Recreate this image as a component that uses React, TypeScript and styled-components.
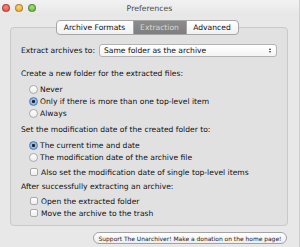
import React from "react";
import styled, { createGlobalStyle } from "styled-components";

const Global = createGlobalStyle`
  html, body { margin: 0; padding: 0; background: #e6e6e6; }
  * { box-sizing: border-box; }
`;

const Window = styled.div`
  width: 300px;
  height: 247px;
  background: #e8e8e8;
  font-family: "DejaVu Sans", "Liberation Sans", sans-serif;
  font-size: 7.6px;
  color: #111;
  display: flex;
  flex-direction: column;
  overflow: hidden;
  border-right: 1px solid #cfcfcf;
`;

const TitleBar = styled.div`
  height: 16px;
  display: grid;
  grid-template-columns: 60px 1fr 60px;
  align-items: center;
  background: linear-gradient(#f2f2f2, #e6e6e6);
`;

const Lights = styled.div`
  display: flex;
  gap: 5px;
  padding-left: 2px;
`;

const Light = styled.span<{ $c: string; $d: string }>`
  width: 8px;
  height: 8px;
  border-radius: 50%;
  background: radial-gradient(circle at 50% 35%, ${(p) => p.$c}, ${(p) => p.$d});
  border: 0.5px solid rgba(0, 0, 0, 0.25);
`;

const Title = styled.div`
  text-align: center;
  color: #4a4a4a;
  font-size: 7.8px;
`;

const Body = styled.div`
  display: flex;
  flex-direction: column;
  padding: 4px 11px 0 10px;
`;

const TabBar = styled.div`
  display: flex;
  justify-content: center;
  margin-bottom: -8px;
  position: relative;
  z-index: 1;
  padding-right: 3px;
`;

const Tab = styled.div<{ $active?: boolean; $w: number }>`
  width: ${(p) => p.$w}px;
  height: 15px;
  display: flex;
  align-items: center;
  justify-content: center;
  font-size: 7.6px;
  border: 1px solid #a6a6a6;
  margin-left: -1px;
  background: ${(p) =>
    p.$active ? "linear-gradient(#8c8c8c, #7e7e7e)" : "linear-gradient(#ffffff, #f1f1f1)"};
  color: ${(p) => (p.$active ? "#d8d8d8" : "#111")};
  &:first-child {
    border-radius: 4px 0 0 4px;
  }
  &:last-child {
    border-radius: 0 4px 4px 0;
  }
`;

const Group = styled.div`
  border: 1px solid #c9c9c9;
  border-radius: 4px;
  background: #e1e1e1;
  height: 199px;
  padding: 16px 10px 0 10px;
  display: flex;
  flex-direction: column;
`;

const PopupRow = styled.div`
  display: flex;
  align-items: center;
  height: 13px;
  gap: 3px;
`;

const PopupLabel = styled.span`
  width: 75px;
  white-space: nowrap;
`;

const Popup = styled.div`
  flex: 1;
  height: 13px;
  background: linear-gradient(#ffffff, #f4f4f4);
  border: 1px solid #b3b3b3;
  border-radius: 3px;
  display: flex;
  align-items: center;
  justify-content: space-between;
  padding: 0 5px 0 4px;
`;

const Arrows = styled.span`
  display: flex;
  flex-direction: column;
  gap: 1px;
  & > i {
    display: block;
    width: 0;
    height: 0;
    border-left: 1.5px solid transparent;
    border-right: 1.5px solid transparent;
  }
  & > i:first-child { border-bottom: 2px solid #333; }
  & > i:last-child { border-top: 2px solid #333; }
`;

const SectionLabel = styled.div<{ $mt: number }>`
  height: 12px;
  line-height: 12px;
  margin-top: ${(p) => p.$mt}px;
  white-space: nowrap;
`;

const Options = styled.div<{ $mt: number }>`
  display: flex;
  flex-direction: column;
  margin-top: ${(p) => p.$mt}px;
  padding-left: 8px;
`;

const OptionRow = styled.div<{ $mt?: number }>`
  height: 12px;
  display: flex;
  align-items: center;
  gap: 2px;
  margin-top: ${(p) => p.$mt ?? 0}px;
  white-space: nowrap;
`;

const Radio = styled.span<{ $on?: boolean }>`
  width: 9px;
  height: 9px;
  border-radius: 50%;
  flex: none;
  border: 1px solid ${(p) => (p.$on ? "#5a7fb0" : "#a9a9a9")};
  background: ${(p) =>
    p.$on
      ? "radial-gradient(circle, #1b2530 0 1.3px, #9cc2ea 1.8px, #5f97d6 100%)"
      : "linear-gradient(#ffffff, #ececec)"};
`;

const Check = styled.span`
  width: 8px;
  height: 8px;
  margin: 0 1px 0 1px;
  flex: none;
  border: 1px solid #a9a9a9;
  border-radius: 2px;
  background: linear-gradient(#ffffff, #ededed);
`;

const Footer = styled.div`
  display: flex;
  justify-content: flex-end;
  padding: 6px 1px 0 0;
`;

const Button = styled.div`
  width: 194px;
  height: 12px;
  border: 1px solid #a3a3a3;
  border-radius: 6px;
  background: linear-gradient(#ffffff, #ededed);
  font-size: 5.95px;
  display: flex;
  align-items: center;
  justify-content: center;
  white-space: nowrap;
  color: #222;
`;

export default function App() {
  return (
    <>
      <Global />
      <Window>
        <TitleBar>
          <Lights>
            <Light $c="#ff8a80" $d="#e0443a" />
            <Light $c="#ffd779" $d="#e0a123" />
            <Light $c="#a9e17a" $d="#5cae3a" />
          </Lights>
          <Title>Preferences</Title>
          <span />
        </TitleBar>
        <Body>
          <TabBar>
            <Tab $w={78}>Archive Formats</Tab>
            <Tab $w={54} $active>
              Extraction
            </Tab>
            <Tab $w={53}>Advanced</Tab>
          </TabBar>
          <Group>
            <PopupRow>
              <PopupLabel>Extract archives to:</PopupLabel>
              <Popup>
                <span>Same folder as the archive</span>
                <Arrows>
                  <i />
                  <i />
                </Arrows>
              </Popup>
            </PopupRow>
            <SectionLabel $mt={11}>Create a new folder for the extracted files:</SectionLabel>
            <Options $mt={3}>
              <OptionRow>
                <Radio />
                Never
              </OptionRow>
              <OptionRow>
                <Radio $on />
                Only if there is more than one top-level item
              </OptionRow>
              <OptionRow>
                <Radio />
                Always
              </OptionRow>
            </Options>
            <SectionLabel $mt={5}>Set the modification date of the created folder to:</SectionLabel>
            <Options $mt={3}>
              <OptionRow>
                <Radio $on />
                The current time and date
              </OptionRow>
              <OptionRow>
                <Radio />
                The modification date of the archive file
              </OptionRow>
              <OptionRow $mt={3}>
                <Check />
                Also set the modification date of single top-level items
              </OptionRow>
            </Options>
            <SectionLabel $mt={3}>After successfully extracting an archive:</SectionLabel>
            <Options $mt={2}>
              <OptionRow>
                <Check />
                Open the extracted folder
              </OptionRow>
              <OptionRow>
                <Check />
                Move the archive to the trash
              </OptionRow>
            </Options>
          </Group>
          <Footer>
            <Button>Support The Unarchiver! Make a donation on the home page!</Button>
          </Footer>
        </Body>
      </Window>
    </>
  );
}
